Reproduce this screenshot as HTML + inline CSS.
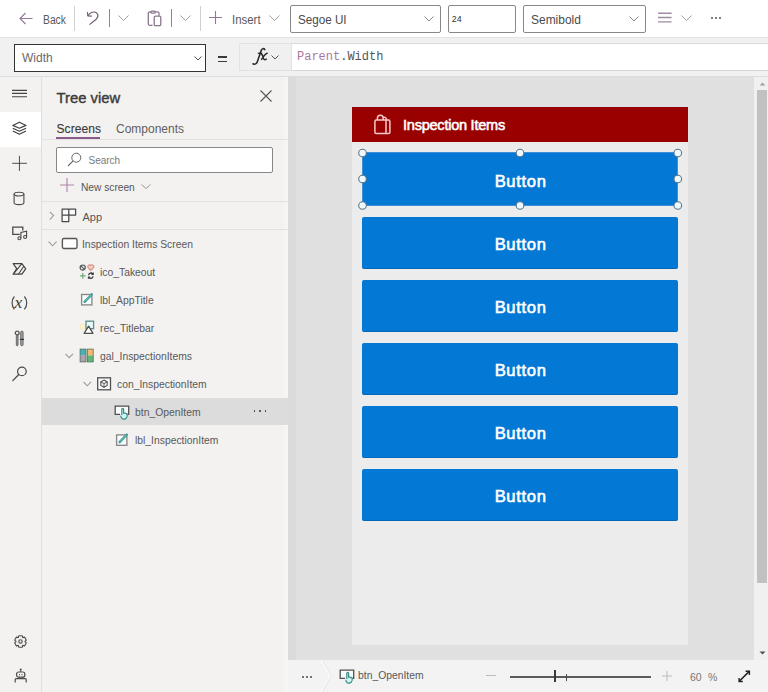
<!DOCTYPE html>
<html><head><meta charset="utf-8">
<style>
*{box-sizing:border-box}
html,body{margin:0;padding:0}
body{width:768px;height:692px;position:relative;overflow:hidden;background:#fff;font-family:"Liberation Sans",sans-serif;color:#323130}
.a{position:absolute}
.t{position:absolute;white-space:nowrap;line-height:1}
svg{position:absolute;overflow:visible}
</style></head><body>

<!-- ===== TOOLBAR ===== -->
<div class="a" style="left:0;top:0;width:768px;height:37px;background:#fff"></div>
<div class="a" style="left:0;top:37px;width:768px;height:1px;background:#e3e3e3"></div>

<!-- back arrow -->
<svg style="left:19px;top:12px" width="14" height="13" viewBox="0 0 14 13"><path d="M13.5 6.5H1M6.5 1L1 6.5L6.5 12" fill="none" stroke="#93769a" stroke-width="1.1"/></svg>
<div class="t" style="left:42.8px;top:13.6px;font-size:12px;color:#5a5a5a;transform:scaleX(0.86);transform-origin:0 0">Back</div>
<div class="a" style="left:74px;top:6px;width:1px;height:25px;background:#d0d0d0"></div>

<!-- undo -->
<svg style="left:86px;top:10px" width="14" height="16" viewBox="0 0 14 16"><path d="M1.4 2.1L1.9 5.8L5.9 6.1" fill="none" stroke="#6f5a70" stroke-width="1.2" stroke-linejoin="round"/><path d="M1.9 5.8C4 2.2 8.6 .8 10.8 3.2c1.6 1.8 1.2 4.2-.6 6L3.5 14.6" fill="none" stroke="#6f5a70" stroke-width="1.2"/></svg>
<div class="a" style="left:109px;top:9px;width:1px;height:18px;background:#8a8a8a"></div>
<svg style="left:118px;top:15px" width="11" height="6" viewBox="0 0 11 6"><path d="M0.5 0.5L5.5 5.5L10.5 0.5" fill="none" stroke="#a0a0a0" stroke-width="1"/></svg>

<!-- paste -->
<svg style="left:147px;top:10px" width="16" height="17" viewBox="0 0 16 17"><path d="M5.5 15.3H2.8A1.5 1.5 0 0 1 1.3 13.8V3.3A1.5 1.5 0 0 1 2.8 1.8H10.5A1.5 1.5 0 0 1 12 3.3V5.8" fill="none" stroke="#8b7590" stroke-width="1.3"/><rect x="3.8" y="1.2" width="4.5" height="2" rx="1" fill="#fff" stroke="#8b7590" stroke-width="1.2"/><rect x="7.2" y="6.2" width="6.6" height="9.4" rx="1.2" fill="#fff" stroke="#8b7590" stroke-width="1.3"/></svg>
<div class="a" style="left:171px;top:9px;width:1px;height:18px;background:#8a8a8a"></div>
<svg style="left:180px;top:15px" width="11" height="6" viewBox="0 0 11 6"><path d="M0.5 0.5L5.5 5.5L10.5 0.5" fill="none" stroke="#a0a0a0" stroke-width="1"/></svg>
<div class="a" style="left:200px;top:6px;width:1px;height:25px;background:#d0d0d0"></div>

<!-- insert -->
<svg style="left:209px;top:11px" width="13" height="13" viewBox="0 0 13 13"><path d="M6.5 0v13M0 6.5h13" fill="none" stroke="#93769a" stroke-width="1.1"/></svg>
<div class="t" style="left:232px;top:13.6px;font-size:12.3px;color:#5a5a5a;transform:scaleX(0.93);transform-origin:0 0">Insert</div>
<svg style="left:269px;top:15px" width="11" height="6" viewBox="0 0 11 6"><path d="M0.5 0.5L5.5 5.5L10.5 0.5" fill="none" stroke="#a0a0a0" stroke-width="1"/></svg>

<!-- font dropdown -->
<div class="a" style="left:290px;top:5px;width:151px;height:28px;border:1px solid #8a8886;border-radius:2px;background:#fff"></div>
<div class="t" style="left:298px;top:14.2px;font-size:12.6px;color:#4a4a4a;transform:scaleX(0.925);transform-origin:0 0">Segoe UI</div>
<svg style="left:424px;top:16px" width="10" height="6" viewBox="0 0 10 6"><path d="M0.5 0.5L5 5L9.5 0.5" fill="none" stroke="#8a8a8a" stroke-width="1"/></svg>

<!-- size box -->
<div class="a" style="left:448px;top:5px;width:68px;height:28px;border:1px solid #8a8886;border-radius:2px;background:#fff"></div>
<div class="t" style="left:451.8px;top:15.4px;font-size:8.8px;color:#333">24</div>

<!-- weight dropdown -->
<div class="a" style="left:523px;top:5px;width:123px;height:28px;border:1px solid #8a8886;border-radius:2px;background:#fff"></div>
<div class="t" style="left:531.3px;top:14.2px;font-size:12.6px;color:#4a4a4a;transform:scaleX(0.95);transform-origin:0 0">Semibold</div>
<svg style="left:629px;top:16px" width="10" height="6" viewBox="0 0 10 6"><path d="M0.5 0.5L5 5L9.5 0.5" fill="none" stroke="#8a8a8a" stroke-width="1"/></svg>

<!-- align -->
<svg style="left:658px;top:12px" width="14" height="11" viewBox="0 0 14 11"><path d="M0 1.2h13.6M0 5.5h13.6M0 9.8h13.6" fill="none" stroke="#a08ba4" stroke-width="1.35"/></svg>
<svg style="left:681px;top:15px" width="11" height="6" viewBox="0 0 11 6"><path d="M0.5 0.5L5.5 5.5L10.5 0.5" fill="none" stroke="#a0a0a0" stroke-width="1"/></svg>
<!-- more -->
<div class="a" style="left:711px;top:17.3px;width:1.9px;height:1.9px;border-radius:50%;background:#555"></div>
<div class="a" style="left:715px;top:17.3px;width:1.9px;height:1.9px;border-radius:50%;background:#555"></div>
<div class="a" style="left:719px;top:17.3px;width:1.9px;height:1.9px;border-radius:50%;background:#555"></div>

<!-- ===== FORMULA BAR ===== -->
<div class="a" style="left:0;top:38px;width:768px;height:38px;background:#f1f1f1"></div>
<div class="a" style="left:14px;top:44px;width:192px;height:28px;border:1px solid #333;background:#fff"></div>
<div class="t" style="left:22px;top:52.2px;font-size:12px;color:#6a6a6a">Width</div>
<svg style="left:194px;top:56px" width="8" height="5" viewBox="0 0 8 5"><path d="M0.5 0.5L4 4L7.5 0.5" fill="none" stroke="#555" stroke-width="1"/></svg>
<div class="a" style="left:218px;top:56px;width:9px;height:1.5px;background:#3a3a3a"></div>
<div class="a" style="left:218px;top:60.5px;width:9px;height:1.5px;background:#3a3a3a"></div>
<div class="a" style="left:239px;top:43px;width:53px;height:28px;border:1px solid #e2e2e2;background:#f0f0f0"></div>
<svg style="left:250px;top:47px" width="20" height="20" viewBox="0 0 20 20"><path d="M14.8 2.6C14 1.2 12 1.3 11.2 3.4L7.4 14.6C6.7 16.8 4.8 17.8 3 16.8" fill="none" stroke="#2b2b2b" stroke-width="1.6" stroke-linecap="round"/><path d="M7.8 6.3H12.2" stroke="#2b2b2b" stroke-width="1.2"/><path d="M9.8 6.2c1.5-.2 2.3.8 3 3.2l.7 2.2c.4 1.1 1.3 1.4 2.8.6M17.2 6.2c-1.4.2-3.2 2.4-5.6 6.2" fill="none" stroke="#2b2b2b" stroke-width="1.5" stroke-linecap="round"/></svg>
<svg style="left:271px;top:55px" width="8" height="5" viewBox="0 0 8 5"><path d="M0.5 0.5L4 4L7.5 0.5" fill="none" stroke="#555" stroke-width="1"/></svg>
<div class="a" style="left:292px;top:43px;width:476px;height:28px;border-top:1px solid #dadada;border-bottom:1px solid #d8d8d8;background:#fff"></div>
<div class="t" style="left:297px;top:51px;font-family:'Liberation Mono',monospace;font-size:12px;color:#555"><span style="color:#a8779f">Parent</span>.Width</div>
<div class="a" style="left:0;top:76px;width:768px;height:1px;background:#dcdcdc"></div>

<!-- ===== LEFT RAIL ===== -->
<div class="a" style="left:0;top:77px;width:41px;height:615px;background:#f3f2f1"></div>
<div class="a" style="left:41px;top:77px;width:1px;height:615px;background:#e1dfdd"></div>
<div class="a" style="left:0;top:112px;width:41px;height:35px;background:#fff"></div>
<!-- hamburger -->
<svg style="left:12px;top:89px" width="15" height="9" viewBox="0 0 15 9"><path d="M0 1.3h15M0 4.4h15M0 7.7h15" fill="none" stroke="#444" stroke-width="1.15"/></svg>
<!-- layers -->
<svg style="left:12px;top:121px" width="15" height="15" viewBox="0 0 15 15"><path d="M7.4 1.2L14 4.4L7.4 7.2L.8 4.4Z" fill="none" stroke="#404040" stroke-width="1.15" stroke-linejoin="round"/><path d="M.8 7.2L7.4 10.2L14 7.2M.8 9.9L7.4 13.3L14 9.9" fill="none" stroke="#404040" stroke-width="1.15" stroke-linejoin="round"/></svg>
<!-- plus -->
<svg style="left:12px;top:155px" width="15" height="16" viewBox="0 0 15 16"><path d="M7.45 0.8v15.1M0.2 8.3h14.7" fill="none" stroke="#3a3a3a" stroke-width="0.9"/></svg>
<!-- database -->
<svg style="left:13px;top:191px" width="12" height="15" viewBox="0 0 12 15"><ellipse cx="6" cy="3.1" rx="4.9" ry="1.9" fill="none" stroke="#4a4a4a" stroke-width="1.1"/><path d="M1.1 3.1v8.6c0 1.1 2.2 1.9 4.9 1.9s4.9-.8 4.9-1.9V3.1" fill="none" stroke="#4a4a4a" stroke-width="1.1"/></svg>
<!-- media -->
<svg style="left:12px;top:226px" width="16" height="15" viewBox="0 0 16 15"><path d="M7.8 8.4H.8V1.2h10v3.4" fill="none" stroke="#4a4a4a" stroke-width="1.3"/><path d="M8.9 12.2V6.4l5.7-1.2v5.8" fill="none" stroke="#4a4a4a" stroke-width="1.1"/><circle cx="7.4" cy="12.2" r="1.5" fill="#f3f2f1" stroke="#4a4a4a" stroke-width="1.1"/><circle cx="13.1" cy="11" r="1.5" fill="#f3f2f1" stroke="#4a4a4a" stroke-width="1.1"/></svg>
<!-- power automate -->
<svg style="left:12px;top:262px" width="15" height="14" viewBox="0 0 15 14"><path d="M1.2 1.6H9.9L13.7 6.8L9.9 12.2H1.2L4.7 6.6Z" fill="none" stroke="#444" stroke-width="1.2" stroke-linejoin="round"/><path d="M9.9 1.6L1.2 12.2M11.8 4.2L6.4 12.2" fill="none" stroke="#444" stroke-width="1.1"/></svg>
<!-- variables (x) -->
<svg style="left:11px;top:295px" width="17" height="16" viewBox="0 0 17 16"><path d="M3.4 1.5C1.5 3.5 1.1 6.2 1.1 8s.4 4.4 2.3 6.4M13.4 1.5c1.9 2 2.3 4.7 2.3 6.5s-.4 4.4-2.3 6.4" fill="none" stroke="#4a4a4a" stroke-width="1.2"/></svg>
<div class="t" style="left:14.5px;top:294px;font-family:'Liberation Serif',serif;font-style:italic;font-size:17.5px;color:#3a3a3a">x</div>
<!-- tools -->
<svg style="left:14px;top:330px" width="11" height="17" viewBox="0 0 11 17"><circle cx="3.2" cy="3" r="1.9" fill="none" stroke="#555" stroke-width="1.3"/><rect x="2.3" y="5" width="1.8" height="10.8" rx="0.9" fill="#8a8a8a" stroke="#555" stroke-width="0.7"/><rect x="6.7" y="1.1" width="2.4" height="14.7" rx="1.2" fill="#a0a0a0" stroke="#555" stroke-width="0.8"/><path d="M5.8 9.4H10" stroke="#333" stroke-width="1.2"/></svg>
<!-- search -->
<svg style="left:12px;top:366px" width="16" height="16" viewBox="0 0 16 16"><circle cx="9.9" cy="5.4" r="4.3" fill="none" stroke="#4a4a4a" stroke-width="1.2"/><path d="M6.8 8.5L.8 14.6" fill="none" stroke="#4a4a4a" stroke-width="1.3" stroke-linecap="round"/></svg>
<!-- settings -->
<svg style="left:14px;top:635px" width="13" height="13" viewBox="0 0 13 13"><path d="M4.26 2.59 L4.73 0.77 L8.27 0.77 L8.74 2.59 L8.76 2.61 L10.58 2.10 L12.35 5.17 L11.00 6.48 L11.00 6.52 L12.35 7.83 L10.58 10.90 L8.76 10.39 L8.74 10.41 L8.27 12.23 L4.73 12.23 L4.26 10.41 L4.24 10.39 L2.42 10.90 L0.65 7.83 L2.00 6.52 L2.00 6.48 L0.65 5.17 L2.42 2.10 L4.24 2.61Z" fill="none" stroke="#4a4a4a" stroke-width="1.1" stroke-linejoin="round"/><circle cx="6.5" cy="6.5" r="1.7" fill="none" stroke="#4a4a4a" stroke-width="1.1"/></svg>
<!-- robot -->
<svg style="left:14px;top:668px" width="14" height="16" viewBox="0 0 14 16"><circle cx="6.7" cy="1.6" r="1" fill="#4a4a4a"/><path d="M6.7 2.2v1.6" stroke="#4a4a4a" stroke-width="1"/><rect x="2.6" y="4" width="8.2" height="5.2" rx="2" fill="none" stroke="#4a4a4a" stroke-width="1.2"/><path d="M5 6.6h.9M7.5 6.6h.9" stroke="#4a4a4a" stroke-width="1.2"/><path d="M1.2 14.6V11.6c0-.5.4-.9.9-.9h9.2c.5 0 .9.4.9.9v3" fill="none" stroke="#4a4a4a" stroke-width="1.2"/><path d="M5 9.2v1.5M8.4 9.2v1.5" stroke="#4a4a4a" stroke-width="1.1"/></svg>

<!-- ===== TREE PANEL ===== -->
<div class="a" style="left:42px;top:77px;width:246px;height:615px;background:#f3f2f1"></div>
<div class="a" style="left:284px;top:77px;width:4px;height:615px;background:#f6f5f4"></div>
<div class="t" style="left:56.5px;top:91px;font-size:14.8px;color:#3a3a3a;-webkit-text-stroke:0.4px #3a3a3a">Tree view</div>
<svg style="left:260px;top:90px" width="12" height="12" viewBox="0 0 12 12"><path d="M0.5 0.5l11 11M11.5 0.5l-11 11" fill="none" stroke="#555" stroke-width="1.1"/></svg>
<div class="t" style="left:56.5px;top:122.6px;font-size:12px;color:#3a3a3a;-webkit-text-stroke:0.15px #3a3a3a;letter-spacing:0.1px">Screens</div>
<div class="t" style="left:116px;top:122.8px;font-size:12px;color:#5e5e5e">Components</div>
<div class="a" style="left:56px;top:137px;width:44px;height:2px;background:#8b5a8d"></div>
<div class="a" style="left:42px;top:139px;width:246px;height:1px;background:#e3e1df"></div>
<!-- search box -->
<div class="a" style="left:56px;top:147px;width:217px;height:26px;border:1px solid #8a8886;border-radius:2px;background:#fff"></div>
<svg style="left:67px;top:152px" width="15" height="15" viewBox="0 0 15 15"><circle cx="9.3" cy="5.7" r="4.5" fill="none" stroke="#666" stroke-width="1"/><path d="M6.1 8.9L1 14" fill="none" stroke="#666" stroke-width="1.1"/></svg>
<div class="t" style="left:88.5px;top:155.5px;font-size:10px;color:#7a7a7a">Search</div>
<!-- new screen -->
<svg style="left:60px;top:178px" width="14" height="14" viewBox="0 0 14 14"><path d="M7 0v14M0 7h14" fill="none" stroke="#a985aa" stroke-width="1.1"/></svg>
<div class="t" style="left:81px;top:183px;font-size:10.2px;color:#555">New screen</div>
<svg style="left:141px;top:184px" width="10" height="5" viewBox="0 0 10 5"><path d="M0.5 0.5L5 4.5L9.5 0.5" fill="none" stroke="#999" stroke-width="1"/></svg>
<div class="a" style="left:42px;top:201px;width:246px;height:1px;background:#e3e1df"></div>
<!-- App -->
<svg style="left:48.5px;top:210.5px" width="6" height="10" viewBox="0 0 6 10"><path d="M0.8 0.8L4.6 4.6L0.8 8.6" fill="none" stroke="#9a9a9a" stroke-width="1.1"/></svg>
<svg style="left:61px;top:208px" width="16" height="15" viewBox="0 0 16 15"><path d="M1.1 1.1H14.6V7H7.8V13.5H1.1Z" fill="#fafafa" stroke="#484848" stroke-width="1.25" stroke-linejoin="round"/><path d="M7.8 1.1V7M1.1 7H7.8" fill="none" stroke="#484848" stroke-width="1.25"/></svg>
<div class="t" style="left:82.5px;top:211.5px;font-size:11px;color:#555">App</div>
<div class="a" style="left:42px;top:229px;width:246px;height:1px;background:#e3e1df"></div>
<!-- screen -->
<svg style="left:47.5px;top:240.5px" width="10" height="6" viewBox="0 0 10 6"><path d="M0.6 0.6L4.5 4.8L8.6 0.6" fill="none" stroke="#9a9a9a" stroke-width="1.1"/></svg>
<svg style="left:61px;top:237px" width="17" height="13" viewBox="0 0 17 13"><rect x="1.4" y="1.5" width="14.6" height="10" rx="1.4" fill="#fdfdfd" stroke="#555" stroke-width="1.35"/></svg>
<div class="t" style="left:82px;top:240px;font-size:10.35px;color:#585858">Inspection Items Screen</div>
<!-- ico_Takeout -->
<svg style="left:78px;top:263px" width="18" height="18" viewBox="0 0 18 18"><circle cx="4.7" cy="4.6" r="2.6" fill="none" stroke="#505050" stroke-width="1.2"/><path d="M2.9 2.8L6.5 6.4" stroke="#505050" stroke-width="1.1"/><path d="M12.8 7.4L10.2 4.7A1.5 1.5 0 0 1 12.8 2.5A1.5 1.5 0 0 1 15.4 4.7Z" fill="#f7d2cc" stroke="#d9877c" stroke-width="1.1" stroke-linejoin="round"/><path d="M4.8 9.9V15.7M1.9 12.8H7.7" stroke="#6fae78" stroke-width="1.3"/><path d="M10.6 12.2a2.3 2.3 0 0 1 4.2-1.2M15 13.2a2.3 2.3 0 0 1-4.2 1.2" fill="none" stroke="#3a3a3a" stroke-width="1.3"/><path d="M15.2 9.6v1.8h-1.8M10.4 15.8V14h1.8" fill="none" stroke="#3a3a3a" stroke-width="1.1"/></svg>
<div class="t" style="left:100px;top:268px;font-size:10.35px;color:#585858">ico_Takeout</div>
<!-- lbl_AppTitle -->
<svg style="left:80px;top:292px" width="14" height="14" viewBox="0 0 14 14"><rect x="1.6" y="2.5" width="10.3" height="10.4" fill="#f7fbfb" stroke="#858585" stroke-width="1.3"/><path d="M4.6 9.8L11.8 2.3" stroke="#3c9f98" stroke-width="2.4" stroke-linecap="round"/><path d="M5.3 8.9L11.2 2.8" stroke="#8fd0c9" stroke-width="0.7"/></svg>
<div class="t" style="left:100px;top:296px;font-size:10.35px;color:#585858">lbl_AppTitle</div>
<!-- rec_Titlebar -->
<svg style="left:79px;top:320px" width="16" height="15" viewBox="0 0 16 15"><circle cx="3.7" cy="6.8" r="2.8" fill="#fcf3cf" stroke="#f1e3b0" stroke-width="0.6"/><rect x="7" y="1.2" width="7.6" height="7.5" fill="#e8f9f9" stroke="#5e8e8b" stroke-width="1.3"/><path d="M9.6 6.2L14 13.3H5.1Z" fill="#fff" stroke="#505050" stroke-width="1.3" stroke-linejoin="round"/></svg>
<div class="t" style="left:100px;top:324px;font-size:10.35px;color:#585858">rec_Titlebar</div>
<!-- gal -->
<svg style="left:65px;top:353px" width="9" height="6" viewBox="0 0 9 6"><path d="M0.5 0.8L4.2 4.6L8 0.8" fill="none" stroke="#9a9a9a" stroke-width="1.1"/></svg>
<svg style="left:79px;top:348px" width="15" height="15" viewBox="0 0 15 15"><rect x="1.1" y="1.1" width="5.9" height="6.5" fill="#48b2ae"/><rect x="1.1" y="7.5" width="5.9" height="6.4" fill="#b39ea9"/><rect x="1.1" y="1.1" width="5.9" height="12.8" fill="none" stroke="#4a6e6c" stroke-width="0.8"/><rect x="8.3" y="1.1" width="5.9" height="6.5" fill="#f5b96e"/><rect x="8.3" y="7.5" width="5.9" height="6.4" fill="#5fb872"/><rect x="8.3" y="1.1" width="5.9" height="12.8" fill="none" stroke="#4e7058" stroke-width="0.8"/></svg>
<div class="t" style="left:100px;top:352px;font-size:10.35px;color:#585858">gal_InspectionItems</div>
<!-- con -->
<svg style="left:83px;top:381px" width="9" height="6" viewBox="0 0 9 6"><path d="M0.5 0.8L4.2 4.8L8 0.8" fill="none" stroke="#9a9a9a" stroke-width="1.1"/></svg>
<svg style="left:96px;top:376px" width="16" height="15" viewBox="0 0 16 15"><rect x="1.7" y="1.8" width="12.8" height="12" fill="#fafafa" stroke="#505050" stroke-width="1.3"/><path d="M8 4.1l3.2 1.8v3.6L8 11.3 4.8 9.5V5.9z" fill="none" stroke="#555" stroke-width="1.1"/><path d="M4.8 5.9L8 7.6l3.2-1.7M8 7.6v3.7" fill="none" stroke="#555" stroke-width="1"/></svg>
<div class="t" style="left:117px;top:380px;font-size:10.35px;color:#585858">con_InspectionItem</div>
<!-- btn selected row -->
<div class="a" style="left:42px;top:398px;width:246px;height:27px;background:#dcdcdc"></div>
<svg style="left:114px;top:405px" width="16" height="15" viewBox="0 0 16 15"><path d="M6 9.4H1.2V1.2h13.5v8.2h-1.5" fill="#f7fbfb" stroke="#505050" stroke-width="1.3"/><path d="M7.8 10V4.2a.9.9 0 0 1 1.8 0V8.2c1.2-.2 2.5 0 3.4.8.6 1.4.2 3.3-.8 4.3-1.2 1-3 1.1-4.2.2-.8-.7-1.2-1.7-1.2-2.7" fill="#ccf4f4" stroke="#3d8b86" stroke-width="1.2" stroke-linejoin="round"/></svg>
<div class="t" style="left:135px;top:408px;font-size:10.35px;color:#585858">btn_OpenItem</div>
<div class="a" style="left:253.5px;top:410px;width:1.9px;height:1.9px;border-radius:50%;background:#333"></div>
<div class="a" style="left:259.0px;top:410px;width:1.9px;height:1.9px;border-radius:50%;background:#333"></div>
<div class="a" style="left:264.5px;top:410px;width:1.9px;height:1.9px;border-radius:50%;background:#333"></div>
<!-- lbl_InspectionItem -->
<svg style="left:115px;top:433px" width="14" height="14" viewBox="0 0 14 14"><rect x="1.6" y="1.9" width="10.3" height="10.4" fill="#f7fbfb" stroke="#858585" stroke-width="1.3"/><path d="M4.6 9.2L11.8 1.7" stroke="#3c9f98" stroke-width="2.4" stroke-linecap="round"/><path d="M5.3 8.3L11.2 2.2" stroke="#8fd0c9" stroke-width="0.7"/></svg>
<div class="t" style="left:135px;top:436px;font-size:10.35px;color:#585858">lbl_InspectionItem</div>

<!-- ===== CANVAS ===== -->
<div class="a" style="left:288px;top:77px;width:466px;height:583px;background:#e0e0e0"></div>
<div class="a" style="left:288px;top:77px;width:8px;height:583px;background:#dbdbdb"></div>
<div class="a" style="left:352px;top:107px;width:336px;height:538px;background:#ececec"></div>
<div class="a" style="left:352px;top:107px;width:336px;height:35px;background:#990000"></div>
<svg style="left:373px;top:114px" width="18" height="21" viewBox="0 0 18 21"><rect x="1.9" y="6.1" width="15" height="13.4" rx="1.3" fill="none" stroke="#f6c9c9" stroke-width="1.5"/><path d="M13 6.1V19.5" stroke="#f6c9c9" stroke-width="1.5"/><path d="M4.4 6.1V4.2a2.9 2.9 0 0 1 5.8 0V6.1M10.2 3.4a2.3 2.3 0 0 1 3.2 2.7" fill="none" stroke="#f6c9c9" stroke-width="1.5"/></svg>
<div class="t" style="left:403px;top:117.5px;font-size:14.6px;color:#fff;-webkit-text-stroke:0.55px #fff;letter-spacing:-0.27px">Inspection Items</div>
<!-- buttons -->
<div class="a" style="left:362px;top:152px;width:316px;height:54px;background:#0378d4"></div>
<div class="a" style="left:362px;top:152px;width:316px;height:54px;border:1px solid #3f8fd8"></div>
<div class="t" style="left:362px;top:173.8px;width:316px;text-align:center;font-size:16.6px;color:#fff;-webkit-text-stroke:0.6px #fff;letter-spacing:0.65px;text-indent:1.2px">Button</div>
<div class="a" style="left:362px;top:217px;width:316px;height:52px;background:#0378d4;border-radius:2px;box-shadow:inset 0 -1px 0 rgba(0,0,0,0.12)"></div>
<div class="t" style="left:362px;top:236.8px;width:316px;text-align:center;font-size:16.6px;color:#fff;-webkit-text-stroke:0.6px #fff;letter-spacing:0.65px;text-indent:1.2px">Button</div>
<div class="a" style="left:362px;top:280px;width:316px;height:52px;background:#0378d4;border-radius:2px;box-shadow:inset 0 -1px 0 rgba(0,0,0,0.12)"></div>
<div class="t" style="left:362px;top:299.8px;width:316px;text-align:center;font-size:16.6px;color:#fff;-webkit-text-stroke:0.6px #fff;letter-spacing:0.65px;text-indent:1.2px">Button</div>
<div class="a" style="left:362px;top:343px;width:316px;height:52px;background:#0378d4;border-radius:2px;box-shadow:inset 0 -1px 0 rgba(0,0,0,0.12)"></div>
<div class="t" style="left:362px;top:362.8px;width:316px;text-align:center;font-size:16.6px;color:#fff;-webkit-text-stroke:0.6px #fff;letter-spacing:0.65px;text-indent:1.2px">Button</div>
<div class="a" style="left:362px;top:406px;width:316px;height:52px;background:#0378d4;border-radius:2px;box-shadow:inset 0 -1px 0 rgba(0,0,0,0.12)"></div>
<div class="t" style="left:362px;top:425.8px;width:316px;text-align:center;font-size:16.6px;color:#fff;-webkit-text-stroke:0.6px #fff;letter-spacing:0.65px;text-indent:1.2px">Button</div>
<div class="a" style="left:362px;top:469px;width:316px;height:52px;background:#0378d4;border-radius:2px;box-shadow:inset 0 -1px 0 rgba(0,0,0,0.12)"></div>
<div class="t" style="left:362px;top:488.8px;width:316px;text-align:center;font-size:16.6px;color:#fff;-webkit-text-stroke:0.6px #fff;letter-spacing:0.65px;text-indent:1.2px">Button</div>
<!-- handles -->
<svg style="left:352px;top:143px" width="340" height="72" viewBox="0 0 340 72">
<g fill="#ecf9fe" stroke="#5f7587" stroke-width="1.1">
<circle cx="10.5" cy="10" r="3.8"/><circle cx="168" cy="10" r="3.8"/><circle cx="325.8" cy="10" r="3.8"/>
<circle cx="10.5" cy="36" r="3.8"/><circle cx="325.8" cy="36" r="3.8"/>
<circle cx="10.5" cy="62.5" r="3.8"/><circle cx="168" cy="62.5" r="3.8"/><circle cx="325.8" cy="62.5" r="3.8"/>
</g></svg>

<!-- scrollbar -->
<div class="a" style="left:754px;top:77px;width:14px;height:583px;background:#f0f0f0"></div>
<div class="a" style="left:757px;top:90px;width:10px;height:493px;background:#c1c1c1"></div>
<svg style="left:759px;top:82px" width="7" height="4" viewBox="0 0 7 4"><path d="M0.5 3.6L3.5 0.4L6.5 3.6Z" fill="#a3a3a3"/></svg>
<svg style="left:759px;top:651px" width="7" height="4" viewBox="0 0 7 4"><path d="M0.5 0.4L3.5 3.6L6.5 0.4Z" fill="#505050"/></svg>

<!-- ===== STATUS BAR ===== -->
<div class="a" style="left:288px;top:660px;width:480px;height:32px;background:#f3f3f3"></div>
<div class="a" style="left:302px;top:676px;width:2.2px;height:2.2px;border-radius:50%;background:#4a4a4a"></div>
<div class="a" style="left:306px;top:676px;width:2.2px;height:2.2px;border-radius:50%;background:#4a4a4a"></div>
<div class="a" style="left:310px;top:676px;width:2.2px;height:2.2px;border-radius:50%;background:#4a4a4a"></div>
<svg style="left:320px;top:660px" width="14" height="32" viewBox="0 0 14 32"><path d="M1.5 0L10.5 15.5L1.5 32" fill="none" stroke="#fbfbfb" stroke-width="2.2"/><path d="M2.4 0L11.2 15.5L2.4 32" fill="none" stroke="#e2e2e2" stroke-width="0.9"/></svg>
<svg style="left:339px;top:669px" width="16" height="16" viewBox="0 0 16 16"><path d="M6 9.4H1.2V1.2h13.5v8.2h-1.5" fill="#f7fbfb" stroke="#505050" stroke-width="1.3"/><path d="M7.8 10V4.2a.9.9 0 0 1 1.8 0V8.2c1.2-.2 2.5 0 3.4.8.6 1.4.2 3.3-.8 4.3-1.2 1-3 1.1-4.2.2-.8-.7-1.2-1.7-1.2-2.7" fill="#ccf4f4" stroke="#3d8b86" stroke-width="1.2" stroke-linejoin="round"/></svg>
<div class="t" style="left:358px;top:671px;font-size:10.35px;color:#585858">btn_OpenItem</div>
<div class="a" style="left:486px;top:675px;width:10px;height:1px;background:#bbb"></div>
<div class="a" style="left:510px;top:675.5px;width:141px;height:2px;background:#5a5a5a"></div>
<div class="a" style="left:554px;top:670px;width:2px;height:11.5px;background:#3a3a3a"></div>
<div class="a" style="left:565.6px;top:673.5px;width:1.5px;height:7px;background:#4a4a4a"></div>
<svg style="left:662px;top:671px" width="10" height="10" viewBox="0 0 10 10"><path d="M5 0v10M0 5h10" stroke="#bbb" stroke-width="1"/></svg>
<div class="t" style="left:690px;top:672px;font-size:10.5px;color:#777">60</div>
<div class="t" style="left:708px;top:672px;font-size:10.5px;color:#777">%</div>
<svg style="left:737px;top:669px" width="15" height="15" viewBox="0 0 15 15"><path d="M2.3 12.2L12.2 2.4" fill="none" stroke="#222" stroke-width="1.5"/><path d="M8.6 2.3H12.4V6M2.1 8.9V12.5H5.8" fill="none" stroke="#222" stroke-width="1.4"/></svg>

</body></html>
